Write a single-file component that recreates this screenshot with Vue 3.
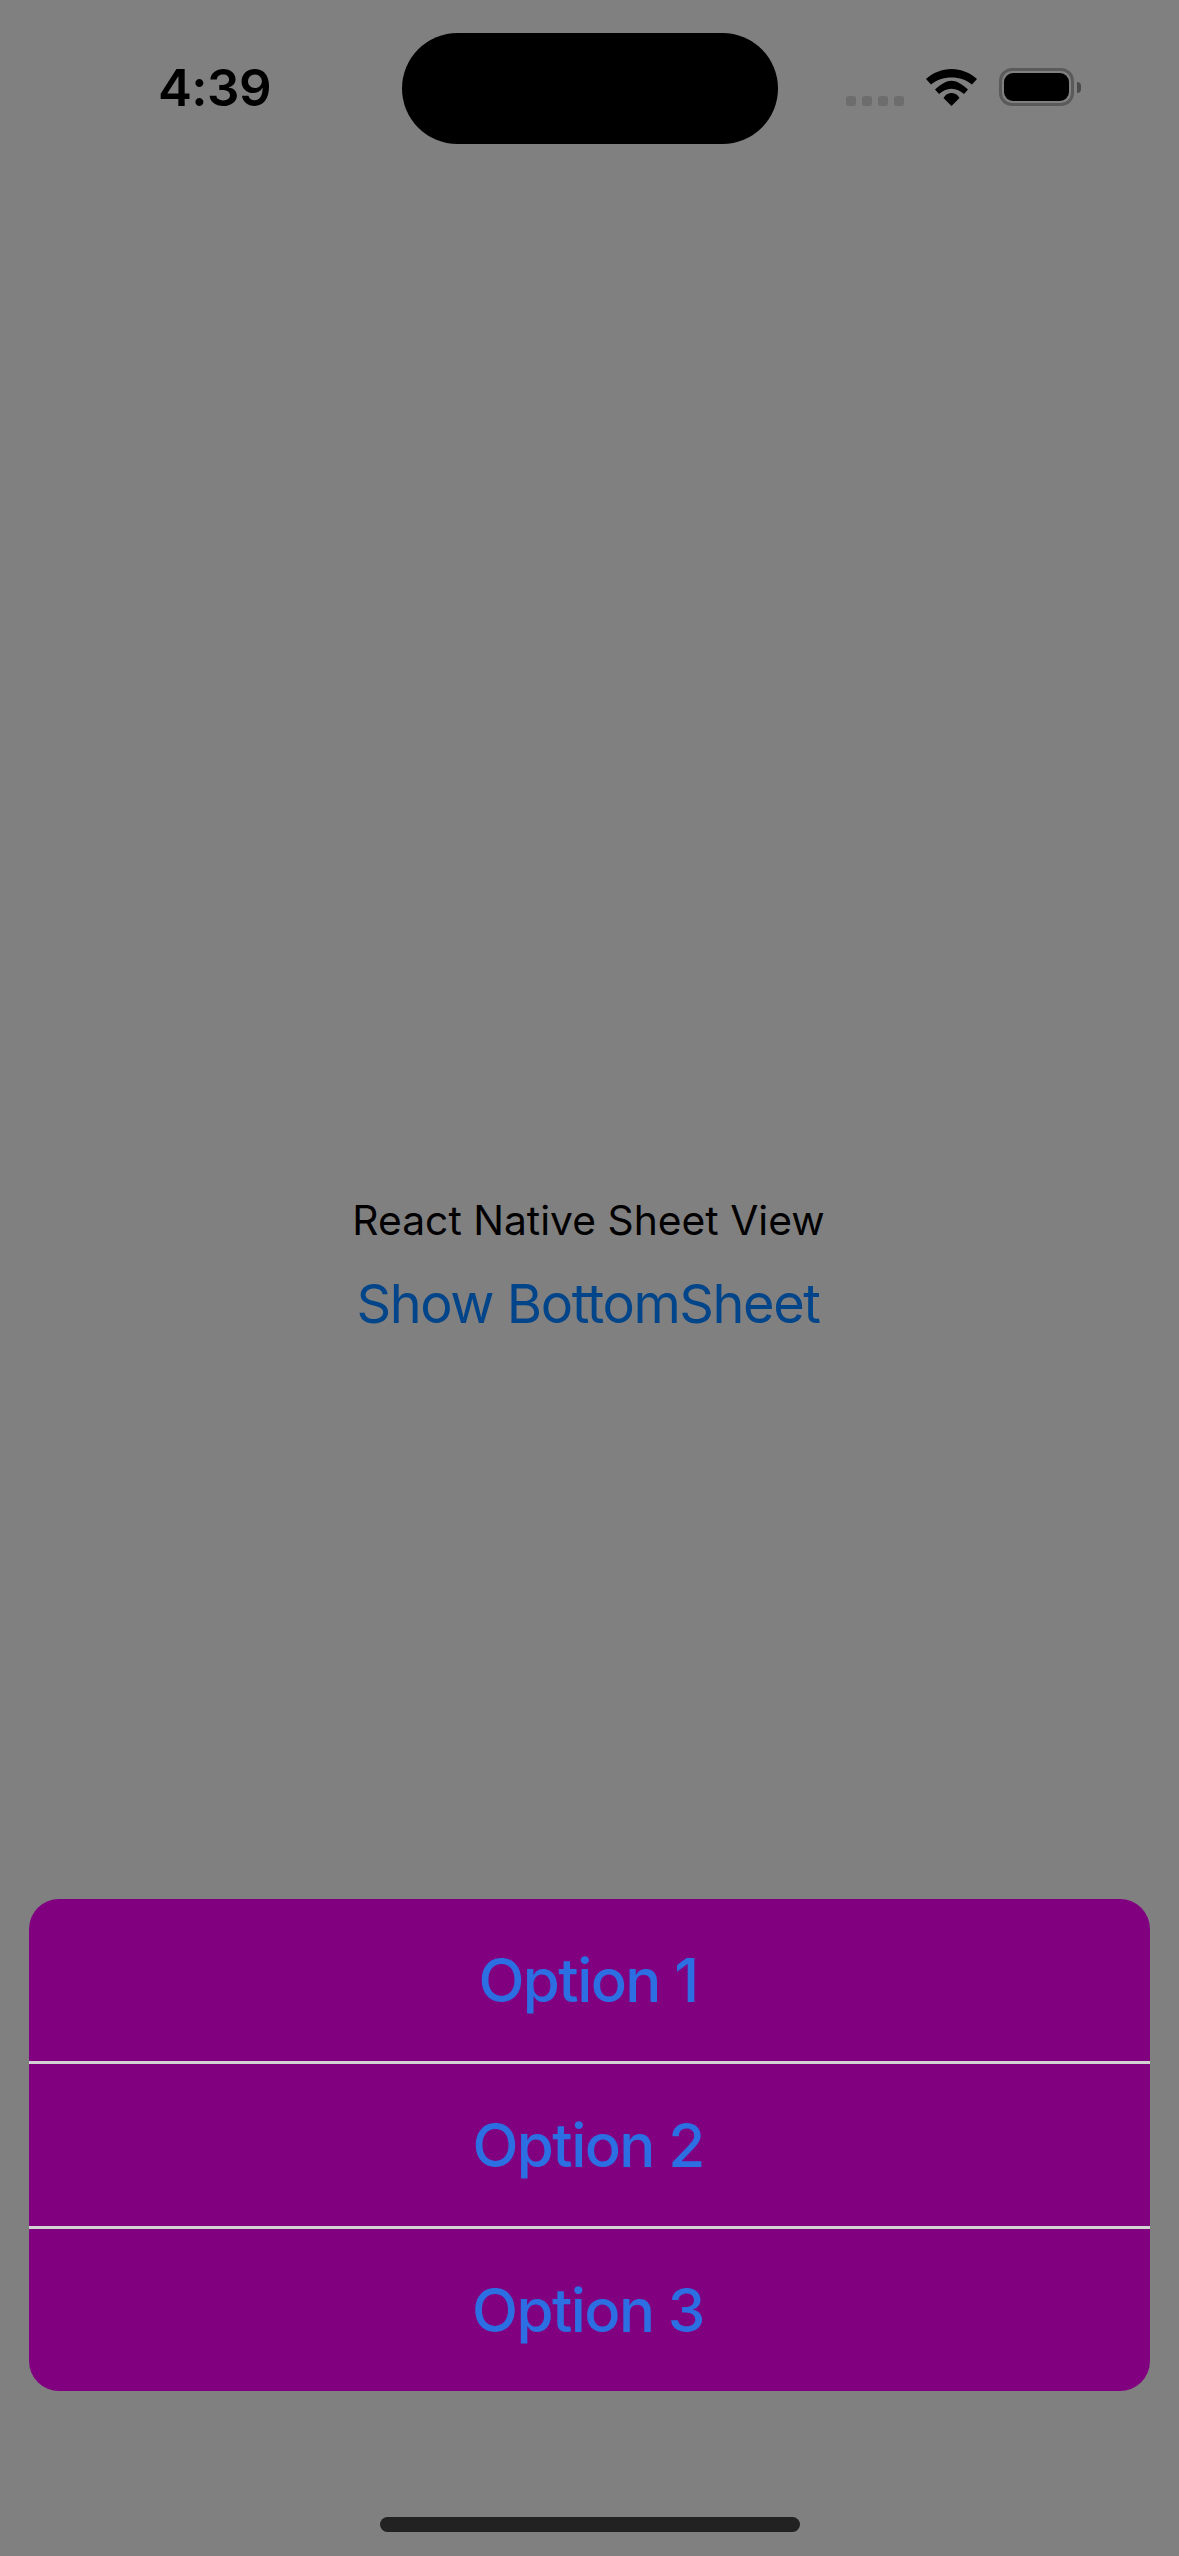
<script setup>
const options = ['Option 1', 'Option 2', 'Option 3']
const dots = [0, 1, 2, 3]
</script>

<template>
  <div class="screen">
    <main class="content">
      <p class="title">React Native Sheet View</p>
      <p class="link">Show BottomSheet</p>
    </main>

    <div class="backdrop">
      <section class="sheet">
        <div v-for="option in options" :key="option" class="option">{{ option }}</div>
      </section>
    </div>

    <div class="home-row"><div class="home-bar"></div></div>

    <header class="status">
      <span class="time">4:39</span>
      <div class="island"></div>
      <div class="indicators">
        <div class="signal"><i v-for="d in dots" :key="d"></i></div>
        <svg class="wifi" viewBox="0 0 51 37" width="51" height="37">
          <path d="M0 10C7 3.800 16 0 25.500 0S44 3.800 51 10L46 15.500C40.500 11 33.500 8.500 25.500 8.500S10.500 11 5 15.500Z" />
          <path d="M9 20.500C13.500 16.500 19.300 11.700 25.500 11.700S37.500 16.500 42 20.500L38 25C34.500 22 30.500 19.700 25.500 19.700S16.500 22 13 25Z" />
          <path d="M17.500 29C19.500 25.800 22.500 24 25.500 24S31.500 25.800 33.500 29L25.500 37Z" />
        </svg>
        <div class="battery"><div class="battery-fill"></div></div>
        <div class="battery-nub"></div>
      </div>
    </header>
  </div>
</template>

<style scoped>
.screen {
  width: 1179px;
  height: 2556px;
  display: grid;
  grid-template: 1fr / 1fr;
  overflow: hidden;
  background: #808080;
  font-family: Inter, "Liberation Sans", sans-serif;
}
.screen > * {
  grid-area: 1 / 1;
}
.content {
  display: flex;
  flex-direction: column;
  align-items: center;
  justify-content: center;
  padding-bottom: 22px;
}
.title {
  margin: 0 2px 0 0;
  font-size: 40.8px;
  line-height: 48px;
  color: #000;
}
.link {
  margin: 26px 3px 0 0;
  font-size: 54px;
  line-height: 68px;
  letter-spacing: -1.4px;
  color: #004489;
}
.backdrop {
  display: flex;
  flex-direction: column;
  justify-content: flex-end;
  padding: 0 29px 165px;
}
.sheet {
  background: #800080;
  border-radius: 30px;
  overflow: hidden;
}
.option {
  height: 162px;
  padding-right: 3px;
  display: flex;
  align-items: center;
  justify-content: center;
  font-size: 60px;
  font-weight: 450;
  letter-spacing: -1.6px;
  color: #2b6fe3;
}
.option + .option {
  border-top: 3px solid #d3d3d3;
}
.home-row {
  display: flex;
  justify-content: center;
  align-items: flex-end;
  padding-bottom: 24px;
}
.home-bar {
  width: 420px;
  height: 15px;
  border-radius: 8px;
  background: #222;
}
.status {
  height: 144px;
  align-self: start;
  display: flex;
  align-items: flex-start;
  position: relative;
}
.time {
  margin: 57px 0 0 158px;
  font-size: 51px;
  line-height: 62px;
  font-weight: 600;
  letter-spacing: -0.6px;
  color: #000;
}
.island {
  position: absolute;
  left: 402px;
  top: 33px;
  width: 376px;
  height: 111px;
  border-radius: 56px;
  background: #000;
}
.indicators {
  position: absolute;
  left: 846px;
  top: 68px;
  display: flex;
  align-items: flex-end;
}
.signal {
  display: flex;
  gap: 6px;
  margin-right: 22px;
}
.signal i {
  width: 10px;
  height: 10px;
  border-radius: 3px;
  background: #6d6d6d;
}
.wifi {
  display: block;
  fill: #000;
  margin-right: 22px;
}
.battery {
  width: 75px;
  height: 38px;
  box-sizing: border-box;
  border: 3px solid #5a5a5a;
  border-radius: 13px;
  padding: 2px 2px;
  margin-right: 3px;
}
.battery-fill {
  height: 100%;
  background: #000;
  border-radius: 9px;
}
.battery-nub {
  width: 4px;
  height: 11px;
  margin-bottom: 13px;
  background: #4a4a4a;
  border-radius: 0 6px 6px 0;
}
</style>

<style>
html, body { margin: 0; }
</style>
